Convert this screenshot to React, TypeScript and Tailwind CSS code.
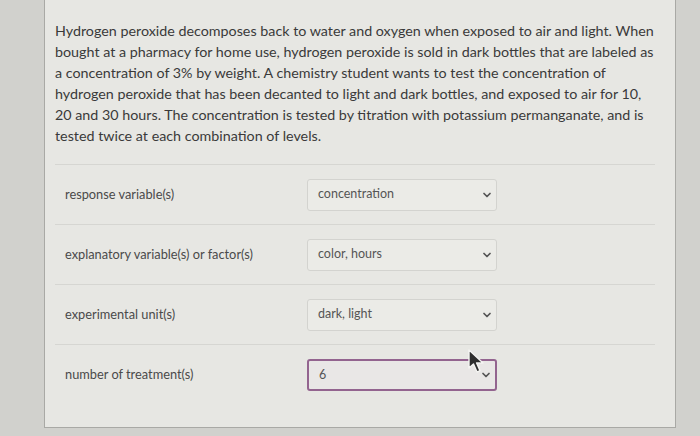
import { ChevronDown } from "lucide-react";

const LINES = [
  "Hydrogen peroxide decomposes back to water and oxygen when exposed to air and light. When",
  "bought at a pharmacy for home use, hydrogen peroxide is sold in dark bottles that are labeled as",
  "a concentration of 3% by weight. A chemistry student wants to test the concentration of",
  "hydrogen peroxide that has been decanted to light and dark bottles, and exposed to air for 10,",
  "20 and 30 hours. The concentration is tested by titration with potassium permanganate, and is",
  "tested twice at each combination of levels.",
];

const ROWS = [
  { label: "response variable(s)", value: "concentration" },
  { label: "explanatory variable(s) or factor(s)", value: "color, hours" },
  { label: "experimental unit(s)", value: "dark, light" },
  { label: "number of treatment(s)", value: "6", focused: true },
];

function Cursor() {
  return (
    <svg
      className="pointer-events-none absolute left-[160px] top-[-10px]"
      width="20"
      height="26"
      viewBox="0 0 20 26"
    >
      <path
        d="M2 1 L2 19 L6.5 15 L10 23 L13 21.6 L9.6 14 L16 14 Z"
        fill="#2e2e2e"
        stroke="#f4f4f2"
        strokeWidth="1.4"
        strokeLinejoin="round"
      />
    </svg>
  );
}

export default function App() {
  return (
    <div className="h-[436px] w-[700px] overflow-hidden bg-[#d1d1cd] font-['Lato','Liberation_Sans',sans-serif]">
      <div className="ml-[44px] h-[428px] w-[632px] border border-t-0 border-[#a9a9a5] bg-[#e7e7e3] pl-[10px] pr-[20px]">
        <p className="pt-[20px] text-[14.3px] leading-[21px] text-[#3a3a3a]">
          {LINES.map((l) => (
            <span key={l} className="block whitespace-nowrap">
              {l}
            </span>
          ))}
        </p>

        <div className="mt-[18px] border-t border-[#d6d6d2]">
          {ROWS.map((r, i) => (
            <div
              key={r.label}
              className={`grid h-[60px] grid-cols-[242px_190px] items-center pl-[10px] ${
                i < ROWS.length - 1 ? "border-b border-[#d6d6d2]" : ""
              }`}
            >
              <span className="text-[12.8px] text-[#4a4a4a]">{r.label}</span>
              <div className="relative">
                <div
                  className={`flex h-[32px] items-center justify-between rounded-[3px] pl-[10px] pr-[3px] text-[12.5px] text-[#555555] ${
                    r.focused
                      ? "border-2 border-[#93648f] bg-[#e9e7e6]"
                      : "border border-[#d3d3cf] bg-[#ebebe7]"
                  }`}
                >
                  <span>{r.value}</span>
                  <ChevronDown className="h-[12px] w-[12px] text-[#555555]" strokeWidth={3.5} />
                </div>
                {r.focused && <Cursor />}
              </div>
            </div>
          ))}
        </div>
      </div>
    </div>
  );
}
